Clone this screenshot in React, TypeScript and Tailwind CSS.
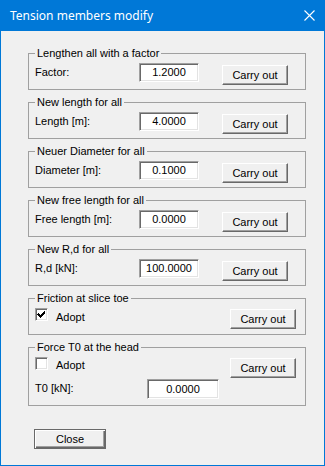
import React from "react";

const font = { fontFamily: '"Liberation Sans", Arial, sans-serif' };

function Btn({ className = "" }: { className?: string }) {
  return (
    <div
      className={`w-[66px] h-[20px] flex items-center justify-center border border-t-white border-l-white border-r-[#696969] border-b-[#696969] shadow-[inset_-1px_-1px_0_#a0a0a0] bg-[#f0f0f0] text-[11px] leading-[13px] text-black ${className}`}
    >
      Carry out
    </div>
  );
}

function Input({ value, w = "w-[60px]", className = "" }: { value: string; w?: string; className?: string }) {
  return (
    <div
      className={`${w} h-[19px] flex items-center justify-center bg-white border border-t-[#a0a0a0] border-l-[#a0a0a0] border-r-white border-b-white shadow-[inset_1px_1px_0_#696969,inset_-1px_-1px_0_#e3e3e3] text-[11px] leading-[13px] text-black ${className}`}
    >
      {value}
    </div>
  );
}

function Check({ checked }: { checked: boolean }) {
  return (
    <div className="w-[13px] h-[13px] bg-white border border-t-[#a0a0a0] border-l-[#a0a0a0] border-r-white border-b-white shadow-[inset_1px_1px_0_#696969,inset_-1px_-1px_0_#e3e3e3] flex items-center justify-center">
      {checked && (
        <svg width="9" height="9" viewBox="0 0 9 9" shapeRendering="crispEdges">
          <path d="M1 3h1v1h1v1h1v-1h1v-1h1v-1h1v-1h1v3h-1v1h-1v1h-1v1h-1v1h-1v-1h-1v-1h-1v-1h-1z" fill="#000" />
        </svg>
      )}
    </div>
  );
}

function Group({ title, children, pb = "pb-[4px]" }: { title: string; children: React.ReactNode; pb?: string }) {
  return (
    <fieldset className={`w-[278px] border border-[#a0a0a0] pl-[6px] pr-0 ${pb}`}>
      <legend className="px-[2px] text-[11px] leading-[13px] text-black">{title}</legend>
      {children}
    </fieldset>
  );
}

function Row({ label, value }: { label: string; value: string }) {
  return (
    <div className="flex items-start mt-[3px] h-[22px]">
      <div className="w-[104px] mt-[3px] text-[11px] leading-[13px] text-black">{label}</div>
      <Input value={value} />
      <Btn className="ml-[23px] mt-[2px]" />
    </div>
  );
}

export default function App() {
  return (
    <div className="w-[325px] h-[466px] flex flex-col bg-[#0078d7]" style={font}>
      <div className="h-[31px] flex items-center justify-between pl-[10px] pr-[10px] shrink-0">
        <span className="text-white text-[12px] leading-[14px]" style={{ fontFamily: '"Noto Sans", "Open Sans", sans-serif' }}>
          Tension members modify
        </span>
        <svg width="11" height="11" viewBox="0 0 11 11">
          <path d="M0.5 0.5L10.5 10.5M10.5 0.5L0.5 10.5" stroke="#fff" strokeWidth="1.1" />
        </svg>
      </div>
      <div className="flex-1 mx-[1px] mb-[1px] bg-[#f0f0f0] pt-[16px] pl-[27px] flex flex-col">
        <div className="flex flex-col gap-[6px]">
          <Group title="Lengthen all with a factor">
            <Row label="Factor:" value="1.2000" />
          </Group>
          <Group title="New length for all">
            <Row label="Length [m]:" value="4.0000" />
          </Group>
          <Group title="Neuer Diameter for all">
            <Row label="Diameter [m]:" value="0.1000" />
          </Group>
          <Group title="New free length for all">
            <Row label="Free length [m]:" value="0.0000" />
          </Group>
          <Group title="New R,d for all">
            <Row label="R,d [kN]:" value="100.0000" />
          </Group>
          <Group title="Friction at slice toe">
            <div className="flex items-start mt-[3px] h-[22px]">
              <Check checked />
              <div className="w-[91px] ml-[8px] mt-[3px] text-[11px] leading-[13px] text-black">Adopt</div>
              <div className="w-[60px]" />
              <Btn className="ml-[23px] mt-[1px]" />
            </div>
          </Group>
          <Group title="Force T0 at the head" pb="pb-[6px]">
            <div className="flex items-start mt-[3px] h-[22px]">
              <Check checked={false} />
              <div className="w-[91px] ml-[8px] mt-[2px] text-[11px] leading-[13px] text-black">Adopt</div>
              <div className="w-[60px]" />
              <Btn className="ml-[23px] mt-[1px]" />
            </div>
            <div className="flex items-start h-[20px]">
              <div className="w-[112px] mt-[3px] text-[11px] leading-[13px] text-black">T0 [kN]:</div>
              <Input value="0.0000" w="w-[72px]" className="h-[20px]" />
            </div>
          </Group>
        </div>
        <div className="mt-[23px] ml-[6px] w-[72px] h-[20px] flex items-center justify-center border border-[#696969] shadow-[inset_1px_1px_0_#fff,inset_-1px_-1px_0_#696969,inset_-2px_-2px_0_#a0a0a0] bg-[#f0f0f0] text-[11px] leading-[13px] text-black">
          Close
        </div>
      </div>
    </div>
  );
}
